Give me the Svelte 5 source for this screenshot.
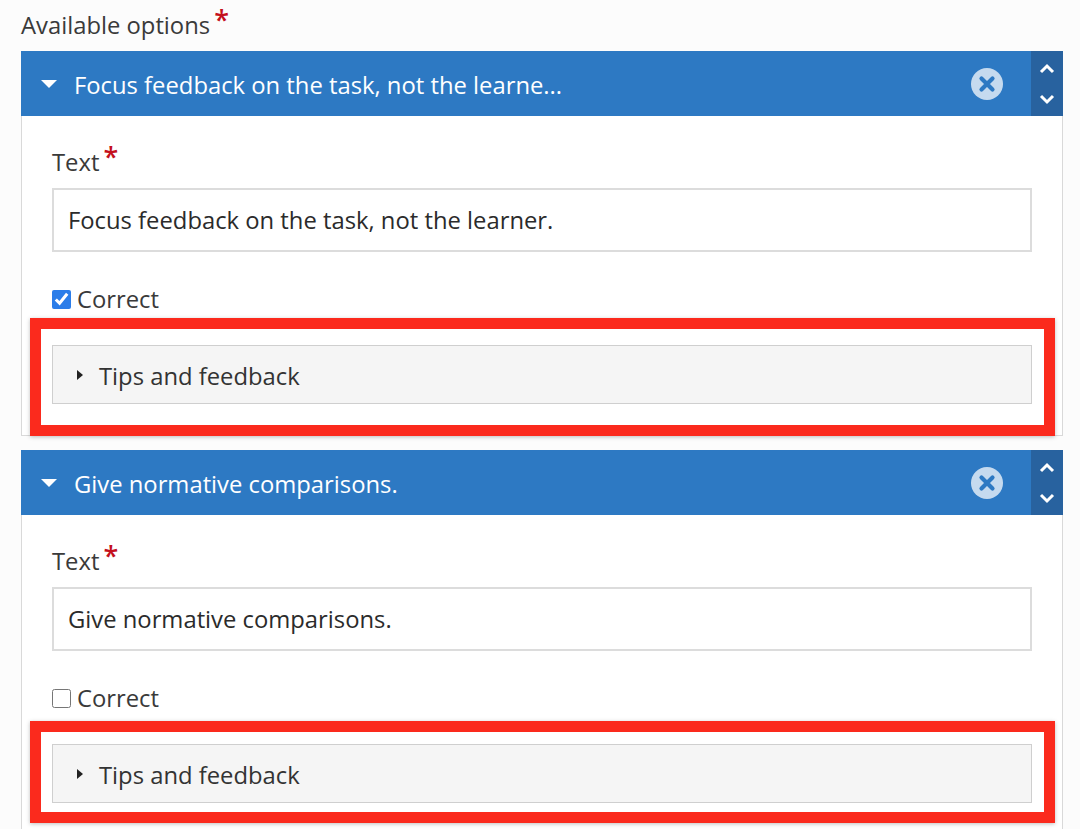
<script>
  const options = [
    { title: "Focus feedback on the task, not the learne...", text: "Focus feedback on the task, not the learner.", correct: true, mark: "first" },
    { title: "Give normative comparisons.", text: "Give normative comparisons.", correct: false, mark: "second" },
  ];
</script>

<div class="page">
  <div class="main-label">Available options<span class="req">*</span></div>

  <div class="list">
    {#each options as option}
      <section class="option">
        <header class="bar">
          <svg class="caret-down" width="16" height="8" viewBox="0 0 16 8"><path d="M0 0h16L8 8z" fill="#fff" /></svg>
          <span class="bar-title">{option.title}</span>
          <svg class="remove" width="32" height="32" viewBox="0 0 32 32">
            <circle cx="16" cy="16" r="16" fill="#c5daef" />
            <path d="M10.5 10.5l11 11M21.5 10.5l-11 11" stroke="#2d79c3" stroke-width="4.2" stroke-linecap="round" />
          </svg>
          <div class="sort">
            <svg width="16" height="11" viewBox="0 0 16 11"><path d="M2 9l6-6 6 6" fill="none" stroke="#fff" stroke-width="3" /></svg>
            <svg width="16" height="11" viewBox="0 0 16 11"><path d="M2 2l6 6 6-6" fill="none" stroke="#fff" stroke-width="3" /></svg>
          </div>
        </header>

        <div class="content">
          <div class="field-label">Text<span class="req">*</span></div>
          <input class="text-input" type="text" value={option.text} readonly />

          <label class="check">
            <input type="checkbox" checked={option.correct} />
            <span>Correct</span>
          </label>

          <div class="tips">
            <svg width="6" height="10" viewBox="0 0 6 10"><path d="M0 0l6 5-6 5z" fill="#222" /></svg>
            <span>Tips and feedback</span>
            <div class="highlight {option.mark}"></div>
          </div>
        </div>
      </section>
    {/each}
  </div>
</div>

<style>
  :global(body) {
    background: #fcfcfc;
    overflow: hidden;
  }

  .page {
    height: 829px;
    overflow: hidden;
    padding: 0 17px 0 21px;
    font-family: "Open Sans", sans-serif;
    font-size: 23.8px;
    color: #3a3a3a;
  }

  .main-label {
    height: 51px;
    line-height: 50px;
  }

  .req {
    display: inline-block;
    margin-left: 4px;
    color: #c4101c;
    font-size: 27px;
    font-weight: 600;
    line-height: 0;
    vertical-align: 4px;
  }

  .list {
    display: flex;
    flex-direction: column;
    gap: 14px;
  }

  .bar {
    height: 65px;
    display: flex;
    align-items: center;
    background: #2d79c3;
    color: #fff;
    padding-left: 20px;
  }

  .caret-down {
    flex: none;
    margin-right: 17px;
  }

  .bar-title {
    flex: 1;
    padding-top: 2px;
  }

  .remove {
    flex: none;
    margin-right: 28px;
  }

  .sort {
    flex: none;
    width: 32px;
    height: 65px;
    display: flex;
    flex-direction: column;
    align-items: center;
    justify-content: center;
    gap: 20px;
    background: #28629f;
  }

  .sort svg {
    display: block;
  }

  .content {
    height: 320px;
    box-sizing: border-box;
    padding: 29px 30px 0;
    background: #fff;
    border: solid #d9d9d9;
    border-width: 0 1px 1px;
  }

  .field-label {
    height: 43px;
    line-height: 34px;
  }

  .text-input {
    display: block;
    width: 100%;
    height: 64px;
    box-sizing: border-box;
    padding: 0 14px;
    border: 2px solid #dcdcdc;
    background: #fff;
    font: inherit;
    color: #2b2b2b;
    outline: none;
  }

  .check {
    display: flex;
    align-items: center;
    gap: 6px;
    margin-top: 30px;
    height: 34px;
    line-height: 33px;
  }

  .check input {
    width: 19px;
    height: 19px;
    margin: 0;
    accent-color: #2b7de9;
  }

  .tips {
    position: relative;
    height: 59px;
    box-sizing: border-box;
    margin-top: 29px;
    display: flex;
    align-items: center;
    gap: 16px;
    padding-left: 24px;
    background: #f5f5f5;
    border: 1px solid #cfcfcf;
    color: #333;
  }

  .tips span {
    padding-top: 2px;
  }

  .highlight {
    position: absolute;
    left: -23px;
    right: -24px;
    box-sizing: border-box;
    border: 11px solid #fb2a1d;
    box-shadow: 0 1px 4px rgba(0, 0, 0, 0.25);
    pointer-events: none;
  }

  .highlight.first {
    top: -28px;
    bottom: -33px;
  }

  .highlight.second {
    top: -24px;
    bottom: -21px;
  }
</style>
